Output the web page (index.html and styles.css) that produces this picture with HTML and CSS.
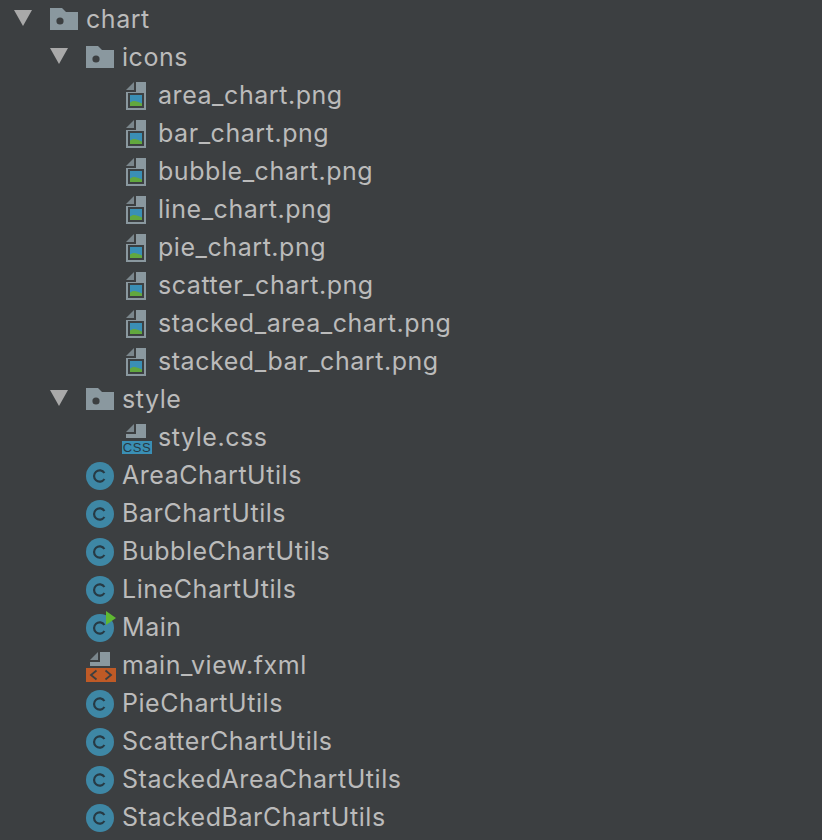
FILE: index.html
```html
<!DOCTYPE html>
<html lang="en">
<head>
    <meta charset="UTF-8">
    <title>chart</title>
    <link rel="stylesheet" href="styles.css">
</head>
<body>
    <svg class="defs" width="0" height="0">
        <symbol id="i-folder" viewBox="0 0 28 22">
            <path fill="#8a989f" d="M0 0H12L16 4H28V22H0Z"/>
            <circle cx="10" cy="13" r="3.6" fill="#3c3f41"/>
        </symbol>
        <symbol id="i-image" viewBox="0 0 20 28">
            <path fill="#8a989f" d="M10 0H20V28H0V10H10Z"/>
            <path fill="#8a989f" d="M0 8L8 0V8Z" opacity=".8"/>
            <rect x="2" y="11" width="16" height="15" fill="#3c4042"/>
            <rect x="4" y="13" width="12" height="11" fill="#3a8fb5"/>
            <path fill="#62a83e" d="M4 20.5C7 18 10 18.5 16 21.5V24H4Z"/>
        </symbol>
        <symbol id="i-css" viewBox="0 0 30 30">
            <path fill="#8a989f" d="M14 0H24V14H4V10H14Z"/>
            <path fill="#8a989f" d="M4 8L12 0V8Z" opacity=".8"/>
            <rect y="17" width="30" height="13" fill="#3a8fb5"/>
            <text x="15" y="28" class="tag">CSS</text>
        </symbol>
        <symbol id="i-class" viewBox="0 0 28 28">
            <circle cx="14" cy="14" r="14" fill="#3e87a5"/>
            <path fill="none" stroke="#273a44" stroke-width="2.2" d="M18.4 11A5.6 5.6 0 1 0 18.4 17"/>
        </symbol>
        <symbol id="i-fxml" viewBox="0 0 30 30">
            <path fill="#8a989f" d="M14 0H24V14H4V10H14Z"/>
            <path fill="#8a989f" d="M4 8L12 0V8Z" opacity=".8"/>
            <rect y="16" width="30" height="14" fill="#bf5a26"/>
            <path fill="none" stroke="#3c3f41" stroke-width="1.8" d="M10.5 18.5L5 23L10.5 27.5M19.5 18.5L25 23L19.5 27.5"/>
        </symbol>
    </svg>

    <ul class="tree">
        <li class="row depth-0"><span class="arrow"></span><svg class="icon"><use href="#i-folder"/></svg><span class="name">chart</span></li>
        <li class="row depth-1"><span class="arrow"></span><svg class="icon"><use href="#i-folder"/></svg><span class="name">icons</span></li>
        <li class="row depth-2"><span class="slot"></span><svg class="icon image"><use href="#i-image"/></svg><span class="name">area_chart.png</span></li>
        <li class="row depth-2"><span class="slot"></span><svg class="icon image"><use href="#i-image"/></svg><span class="name">bar_chart.png</span></li>
        <li class="row depth-2"><span class="slot"></span><svg class="icon image"><use href="#i-image"/></svg><span class="name">bubble_chart.png</span></li>
        <li class="row depth-2"><span class="slot"></span><svg class="icon image"><use href="#i-image"/></svg><span class="name">line_chart.png</span></li>
        <li class="row depth-2"><span class="slot"></span><svg class="icon image"><use href="#i-image"/></svg><span class="name">pie_chart.png</span></li>
        <li class="row depth-2"><span class="slot"></span><svg class="icon image"><use href="#i-image"/></svg><span class="name">scatter_chart.png</span></li>
        <li class="row depth-2"><span class="slot"></span><svg class="icon image"><use href="#i-image"/></svg><span class="name">stacked_area_chart.png</span></li>
        <li class="row depth-2"><span class="slot"></span><svg class="icon image"><use href="#i-image"/></svg><span class="name">stacked_bar_chart.png</span></li>
        <li class="row depth-1"><span class="arrow"></span><svg class="icon"><use href="#i-folder"/></svg><span class="name">style</span></li>
        <li class="row depth-2"><span class="slot"></span><svg class="icon tagged"><use href="#i-css"/></svg><span class="name">style.css</span></li>
        <li class="row depth-1"><span class="slot"></span><svg class="icon class"><use href="#i-class"/></svg><span class="name">AreaChartUtils</span></li>
        <li class="row depth-1"><span class="slot"></span><svg class="icon class"><use href="#i-class"/></svg><span class="name">BarChartUtils</span></li>
        <li class="row depth-1"><span class="slot"></span><svg class="icon class"><use href="#i-class"/></svg><span class="name">BubbleChartUtils</span></li>
        <li class="row depth-1"><span class="slot"></span><svg class="icon class"><use href="#i-class"/></svg><span class="name">LineChartUtils</span></li>
        <li class="row depth-1"><span class="slot"></span><span class="runnable"><svg class="icon class"><use href="#i-class"/></svg><span class="run"></span></span><span class="name">Main</span></li>
        <li class="row depth-1"><span class="slot"></span><svg class="icon tagged"><use href="#i-fxml"/></svg><span class="name">main_view.fxml</span></li>
        <li class="row depth-1"><span class="slot"></span><svg class="icon class"><use href="#i-class"/></svg><span class="name">PieChartUtils</span></li>
        <li class="row depth-1"><span class="slot"></span><svg class="icon class"><use href="#i-class"/></svg><span class="name">ScatterChartUtils</span></li>
        <li class="row depth-1"><span class="slot"></span><svg class="icon class"><use href="#i-class"/></svg><span class="name">StackedAreaChartUtils</span></li>
        <li class="row depth-1"><span class="slot"></span><svg class="icon class"><use href="#i-class"/></svg><span class="name">StackedBarChartUtils</span></li>
    </ul>
</body>
</html>
```

FILE: styles.css
```css
html, body {
    margin: 0;
    height: 100%;
    background: #3c3f41;
}
body {
    overflow: hidden;
}
.defs {
    display: block;
    height: 0;
}
.tag {
    font: 13px "Liberation Sans", sans-serif;
    fill: #273a44;
    text-anchor: middle;
}
.tree {
    list-style: none;
    margin: 0;
    padding: 0;
    font-family: Inter, "Liberation Sans", sans-serif;
    font-size: 25px;
    letter-spacing: .55px;
    color: #bbbbbb;
}
.row {
    display: flex;
    align-items: center;
    height: 38px;
}
.depth-0 { padding-left: 14px; }
.depth-1 { padding-left: 50px; }
.depth-2 { padding-left: 86px; }
.slot, .arrow {
    flex: none;
    width: 36px;
}
.arrow::before {
    content: "";
    display: block;
    width: 0;
    margin-top: -2px;
    border-left: 9px solid transparent;
    border-right: 9px solid transparent;
    border-top: 16px solid #a9a9a9;
}
.icon {
    flex: none;
    width: 28px;
    height: 22px;
    margin-right: 8px;
}
.icon.image {
    width: 20px;
    height: 28px;
    margin: 2px 12px 0 4px;
}
.icon.tagged {
    width: 30px;
    height: 30px;
    margin: 4px 6px 0 0;
}
.icon.class {
    height: 28px;
    margin-top: 2px;
}
.runnable {
    position: relative;
    display: flex;
}
.run {
    position: absolute;
    top: -1px;
    left: 20px;
    border-top: 7px solid transparent;
    border-bottom: 7px solid transparent;
    border-left: 10px solid #5fb832;
}
```
